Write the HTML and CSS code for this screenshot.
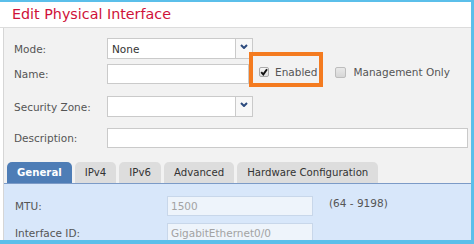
FILE: index.html
```html
<!DOCTYPE html>
<html>
<head>
<meta charset="utf-8">
<link rel="stylesheet" href="styles.css">
</head>
<body>
<div class="frame">
  <div class="dialog">
    <div class="header"><h1 class="title">Edit Physical Interface</h1></div>
    <div class="body">
      <div class="form">
        <div class="row row-mode">
          <span class="label">Mode:</span>
          <div class="select"><span class="select-value">None</span></div>
          <span class="select-btn"><svg width="8" height="5" viewBox="0 0 8 5"><polyline points="1,1 4,4 7,1" fill="none" stroke="#2b4a7d" stroke-width="2"/></svg></span>
        </div>
        <div class="row row-name">
          <span class="label">Name:</span>
          <div class="input w-name"></div>
          <span class="check-group highlight">
            <span class="checkbox checked"><svg width="8" height="8" viewBox="0 0 8 8"><path d="M1.2 4.2 L3.3 6.4 L7 1.2" fill="none" stroke="#111" stroke-width="1.9"/></svg></span>
            <span class="check-label">Enabled</span>
            <span class="callout"></span>
          </span>
          <span class="check-group mgmt">
            <span class="checkbox unchecked"></span>
            <span class="check-label">Management Only</span>
          </span>
        </div>
        <div class="row row-zone">
          <span class="label">Security Zone:</span>
          <div class="select"></div>
          <span class="select-btn"><svg width="8" height="5" viewBox="0 0 8 5"><polyline points="1,1 4,4 7,1" fill="none" stroke="#2b4a7d" stroke-width="2"/></svg></span>
        </div>
        <div class="row row-desc">
          <span class="label">Description:</span>
          <div class="input w-desc"></div>
        </div>
      </div>
      <div class="tabs">
        <span class="tab active">General</span>
        <span class="tab">IPv4</span>
        <span class="tab">IPv6</span>
        <span class="tab">Advanced</span>
        <span class="tab">Hardware Configuration</span>
      </div>
      <div class="panel">
        <div class="prow">
          <span class="plabel">MTU:</span>
          <div class="pinput">1500</div>
          <span class="range">(64 - 9198)</span>
        </div>
        <div class="prow">
          <span class="plabel">Interface ID:</span>
          <div class="pinput">GigabitEthernet0/0</div>
        </div>
      </div>
    </div>
  </div>
</div>
</body>
</html>
```

FILE: styles.css
```css
html, body {
  margin: 0;
  padding: 0;
}
body {
  width: 474px;
  height: 244px;
  overflow: hidden;
  font-family: "DejaVu Sans", Verdana, sans-serif;
  font-size: 10.5px;
  color: #555;
}
.frame {
  height: 244px;
  box-sizing: border-box;
  background: #5bbfea;
  padding: 2px 3px 4px 0;
}
.dialog {
  height: 100%;
  background: #fff;
  display: flex;
  flex-direction: column;
  overflow: hidden;
}
.header {
  flex: none;
  height: 25px;
  border-bottom: 1px solid #dcdcdc;
  display: flex;
  align-items: center;
  padding-left: 12px;
}
.title {
  margin: 0;
  font-weight: normal;
  font-size: 14.3px;
  line-height: 1;
  color: #cf1139;
}
.body {
  flex: 1;
  margin-left: 3px;
  border-left: 1px solid #d6d6d6;
  background: #f2f2f2;
  display: flex;
  flex-direction: column;
  overflow: hidden;
}
.form {
  padding: 10px 3px 0 10px;
  display: flex;
  flex-direction: column;
}
.row {
  display: flex;
  align-items: center;
}
.row-name { margin-top: 5px; }
.row-zone { margin-top: 12px; }
.row-desc { margin-top: 11px; }
.label {
  width: 93px;
  flex: none;
}
.select {
  width: 129px;
  height: 21px;
  box-sizing: border-box;
  border: 1px solid #cacaca;
  background: #fff;
  display: flex;
  align-items: center;
  padding-left: 4px;
  color: #333;
}
.select-btn {
  width: 17px;
  height: 21px;
  box-sizing: border-box;
  border: 1px solid #cacaca;
  border-left: none;
  background: #f7f7f7;
  display: flex;
  justify-content: center;
  padding-top: 5px;
}
.input {
  height: 20px;
  box-sizing: border-box;
  border: 1px solid #cacaca;
  background: #fff;
}
.w-name { width: 142px; }
.w-desc { width: 361px; }
.check-group {
  display: flex;
  align-items: center;
  gap: 6px;
  position: relative;
  margin-bottom: 4px;
}
.highlight { margin-left: 10px; }
.mgmt { margin-left: 18px; gap: 7px; }
.checkbox {
  flex: none;
  box-sizing: border-box;
  border-radius: 2px;
  display: flex;
  align-items: center;
  justify-content: center;
}
.checked {
  width: 10px;
  height: 10px;
  border: 1px solid #a9a9a9;
  background: linear-gradient(#f6f6f6, #dedede);
}
.unchecked {
  width: 11px;
  height: 11px;
  border: 1px solid #bdbdbd;
  background: linear-gradient(#e9e9e9, #d6d6d6);
}
.callout {
  position: absolute;
  top: -14px;
  left: -10px;
  right: -6px;
  bottom: -9px;
  border: 4px solid #f47b20;
}
.tabs {
  display: flex;
  gap: 3px;
  padding-left: 3px;
  margin-top: 14px;
  flex: none;
}
.tab {
  height: 21px;
  padding: 0 10px;
  background: #dddddd;
  border-radius: 5px 5px 0 0;
  font-family: "DejaVu Sans Condensed", Tahoma, sans-serif;
  font-size: 11.3px;
  color: #333;
  display: flex;
  align-items: center;
}
.tab.active {
  background: #4e7db6;
  color: #fff;
  font-weight: bold;
}
.panel {
  flex: 1;
  background: #d8e7fa;
  border-top: 1px solid #7c9bc7;
  padding: 12px 0 0 11px;
}
.prow {
  display: flex;
  align-items: center;
}
.prow + .prow { margin-top: 7px; }
.plabel {
  width: 152px;
  flex: none;
}
.pinput {
  width: 146px;
  height: 20px;
  box-sizing: border-box;
  border: 1px solid #c8d7ea;
  background: #eef4fb;
  color: #a3a3a3;
  padding-left: 3px;
  display: flex;
  align-items: center;
}
.range {
  margin-left: 16px;
  align-self: flex-start;
  margin-top: 1px;
}
```
